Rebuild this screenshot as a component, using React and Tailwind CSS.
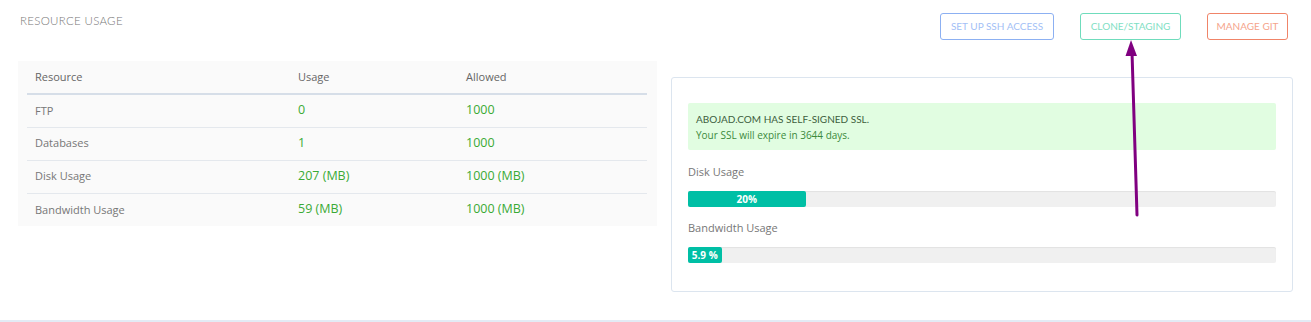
import React from "react";

const rows = [
  { name: "FTP", usage: "0", allowed: "1000" },
  { name: "Databases", usage: "1", allowed: "1000" },
  { name: "Disk Usage", usage: "207 (MB)", allowed: "1000 (MB)" },
  { name: "Bandwidth Usage", usage: "59 (MB)", allowed: "1000 (MB)" },
];

const Bar = ({ label, pct, text }) => (
  <div>
    <div className="text-[11px] text-[#777] h-[18px] leading-[18px]">{label}</div>
    <div className="mt-[10px] h-[16px] bg-[#f0f0f0] rounded-[2px] shadow-[inset_0_1px_1px_rgba(0,0,0,0.06)] flex">
      <div
        className="h-full bg-[#00bfa5] rounded-[2px] text-white text-[10px] font-bold leading-[16px] text-center"
        style={{ width: pct }}
      >
        {text}
      </div>
    </div>
  </div>
);

const App = () => {
  return (
    <div className="relative w-full h-[322px] bg-white border-b-2 border-[#e3ebf5] font-['Open_Sans',sans-serif] overflow-hidden">
      <div className="flex justify-between items-start pl-[20px] pr-[23px] pt-[13px]">
        <div className="font-['Lato',sans-serif] text-[11.5px] text-[#777] font-light mt-[-1px] tracking-[0.3px]">RESOURCE USAGE</div>
        <div className="flex gap-[26px] font-['Lato',sans-serif] text-[10px]">
          <button className="h-[27px] w-[114px] border border-[#8cb0f2] rounded-[3px] text-[#a3bff6]">SET UP SSH ACCESS</button>
          <button className="h-[27px] w-[101px] border border-[#6fdcbc] rounded-[3px] text-[#7fe0c4]">CLONE/STAGING</button>
          <button className="h-[27px] w-[81px] border border-[#f08468] rounded-[3px] text-[#f5a48c]">MANAGE GIT</button>
        </div>
      </div>

      <div className="flex items-start pl-[18px] mt-[21px]">
        <div className="w-[639px] bg-[#fafafa] px-[9px] pb-0">
          <table className="w-[620px] table-fixed border-collapse text-[11px]">
            <thead>
              <tr className="h-[33px] border-b-2 border-[#d6dee8] text-[#666] text-left">
                <th className="font-normal pl-[8px] w-[271px]">Resource</th>
                <th className="font-normal w-[168px]">Usage</th>
                <th className="font-normal">Allowed</th>
              </tr>
            </thead>
            <tbody>
              {rows.map((r, i) => (
                <tr key={r.name} className={"h-[33px] " + (i < rows.length - 1 ? "border-b border-[#e4e8ed]" : "")}>
                  <td className="pl-[8px] text-[#777]">{r.name}</td>
                  <td className="text-[12.5px] text-[#3aaa35]">{r.usage}</td>
                  <td className="text-[12.5px] text-[#3aaa35]">{r.allowed}</td>
                </tr>
              ))}
            </tbody>
          </table>
        </div>

        <div className="ml-[14px] mt-[16px] w-[622px] border border-[#dce5ef] rounded-[3px] px-[16px] pt-[25px] pb-[28px]">
          <div className="h-[47px] bg-[#e1fde1] rounded-[2px] pl-[8px] pt-[8px]">
            <div className="font-['Lato',sans-serif] text-[10px] text-[#3d5e3d] leading-[16px]">ABOJAD.COM HAS SELF-SIGNED SSL.</div>
            <div className="text-[10px] text-[#3c8a3c] leading-[17px]">Your SSL will expire in 3644 days.</div>
          </div>
          <div className="mt-[13px]">
            <Bar label="Disk Usage" pct="20%" text="20%" />
          </div>
          <div className="mt-[12px]">
            <Bar label="Bandwidth Usage" pct="5.7%" text="5.9 %" />
          </div>
        </div>
      </div>

      <svg className="absolute left-0 top-0 pointer-events-none" width="1311" height="322">
        <line x1="1137" y1="215" x2="1132" y2="52" stroke="#800080" strokeWidth="3" strokeLinecap="round" />
        <polygon points="1131,40 1125.5,56 1137,56" fill="#800080" />
      </svg>
    </div>
  );
};

export default App;
